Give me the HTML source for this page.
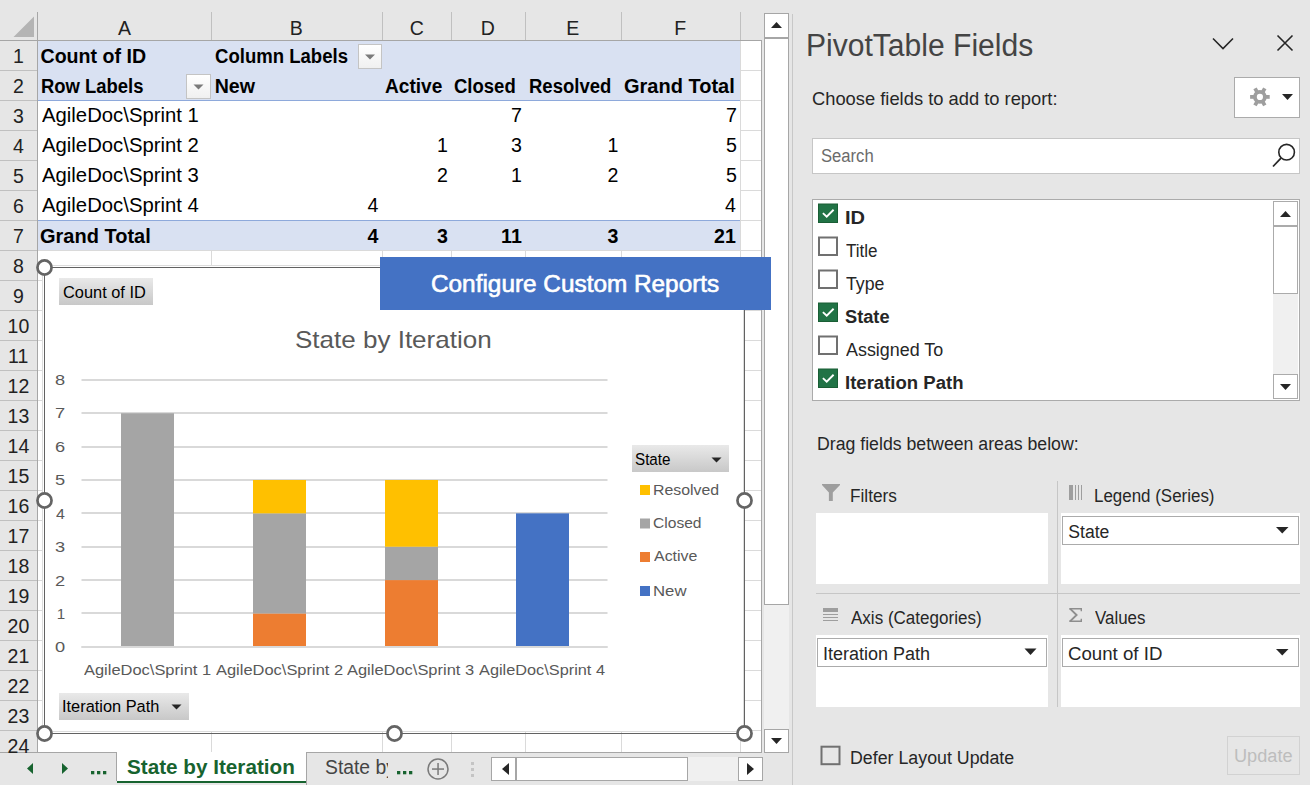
<!DOCTYPE html>
<html><head><meta charset="utf-8"><title>Excel PivotTable</title><style>
html,body{margin:0;padding:0}
body{width:1310px;height:785px;overflow:hidden;position:relative;background:#e6e6e6;font-family:'Liberation Sans',sans-serif}
.a{position:absolute}
.t{position:absolute;white-space:nowrap;line-height:1;font-family:'Liberation Sans',sans-serif}
svg{position:absolute;left:0;top:0;overflow:visible}
</style></head><body>
<div class="a" style="left:38px;top:41px;width:723px;height:711px;background:#fff;"></div>
<div class="a" style="left:211px;top:41px;width:1px;height:711px;background:#dadada;"></div>
<div class="a" style="left:382px;top:41px;width:1px;height:711px;background:#dadada;"></div>
<div class="a" style="left:451px;top:41px;width:1px;height:711px;background:#dadada;"></div>
<div class="a" style="left:525px;top:41px;width:1px;height:711px;background:#dadada;"></div>
<div class="a" style="left:621px;top:41px;width:1px;height:711px;background:#dadada;"></div>
<div class="a" style="left:740px;top:41px;width:1px;height:711px;background:#dadada;"></div>
<div class="a" style="left:38px;top:70px;width:723px;height:1px;background:#dadada;"></div>
<div class="a" style="left:38px;top:100px;width:723px;height:1px;background:#dadada;"></div>
<div class="a" style="left:38px;top:130px;width:723px;height:1px;background:#dadada;"></div>
<div class="a" style="left:38px;top:160px;width:723px;height:1px;background:#dadada;"></div>
<div class="a" style="left:38px;top:190px;width:723px;height:1px;background:#dadada;"></div>
<div class="a" style="left:38px;top:220px;width:723px;height:1px;background:#dadada;"></div>
<div class="a" style="left:38px;top:250px;width:723px;height:1px;background:#dadada;"></div>
<div class="a" style="left:38px;top:280px;width:723px;height:1px;background:#dadada;"></div>
<div class="a" style="left:38px;top:310px;width:723px;height:1px;background:#dadada;"></div>
<div class="a" style="left:38px;top:340px;width:723px;height:1px;background:#dadada;"></div>
<div class="a" style="left:38px;top:370px;width:723px;height:1px;background:#dadada;"></div>
<div class="a" style="left:38px;top:400px;width:723px;height:1px;background:#dadada;"></div>
<div class="a" style="left:38px;top:430px;width:723px;height:1px;background:#dadada;"></div>
<div class="a" style="left:38px;top:460px;width:723px;height:1px;background:#dadada;"></div>
<div class="a" style="left:38px;top:490px;width:723px;height:1px;background:#dadada;"></div>
<div class="a" style="left:38px;top:520px;width:723px;height:1px;background:#dadada;"></div>
<div class="a" style="left:38px;top:550px;width:723px;height:1px;background:#dadada;"></div>
<div class="a" style="left:38px;top:580px;width:723px;height:1px;background:#dadada;"></div>
<div class="a" style="left:38px;top:610px;width:723px;height:1px;background:#dadada;"></div>
<div class="a" style="left:38px;top:640px;width:723px;height:1px;background:#dadada;"></div>
<div class="a" style="left:38px;top:670px;width:723px;height:1px;background:#dadada;"></div>
<div class="a" style="left:38px;top:700px;width:723px;height:1px;background:#dadada;"></div>
<div class="a" style="left:38px;top:730px;width:723px;height:1px;background:#dadada;"></div>
<div class="a" style="left:38px;top:760px;width:723px;height:1px;background:#dadada;"></div>
<div class="a" style="left:38px;top:41px;width:702px;height:59px;background:#d9e1f2;"></div>
<div class="a" style="left:38px;top:101px;width:702px;height:119px;background:#fff;"></div>
<div class="a" style="left:38px;top:221px;width:702px;height:29px;background:#d9e1f2;"></div>
<div class="a" style="left:38px;top:100px;width:702px;height:1px;background:#8ea9db;"></div>
<div class="a" style="left:38px;top:220px;width:702px;height:1px;background:#8ea9db;"></div>
<div class="a" style="left:211px;top:12px;width:1px;height:28px;background:#c0c0c0;"></div>
<div class="a" style="left:382px;top:12px;width:1px;height:28px;background:#c0c0c0;"></div>
<div class="a" style="left:451px;top:12px;width:1px;height:28px;background:#c0c0c0;"></div>
<div class="a" style="left:525px;top:12px;width:1px;height:28px;background:#c0c0c0;"></div>
<div class="a" style="left:621px;top:12px;width:1px;height:28px;background:#c0c0c0;"></div>
<div class="a" style="left:740px;top:12px;width:1px;height:28px;background:#c0c0c0;"></div>
<div class="a" style="left:0px;top:70px;width:37px;height:1px;background:#c0c0c0;"></div>
<div class="a" style="left:0px;top:100px;width:37px;height:1px;background:#c0c0c0;"></div>
<div class="a" style="left:0px;top:130px;width:37px;height:1px;background:#c0c0c0;"></div>
<div class="a" style="left:0px;top:160px;width:37px;height:1px;background:#c0c0c0;"></div>
<div class="a" style="left:0px;top:190px;width:37px;height:1px;background:#c0c0c0;"></div>
<div class="a" style="left:0px;top:220px;width:37px;height:1px;background:#c0c0c0;"></div>
<div class="a" style="left:0px;top:250px;width:37px;height:1px;background:#c0c0c0;"></div>
<div class="a" style="left:0px;top:280px;width:37px;height:1px;background:#c0c0c0;"></div>
<div class="a" style="left:0px;top:310px;width:37px;height:1px;background:#c0c0c0;"></div>
<div class="a" style="left:0px;top:340px;width:37px;height:1px;background:#c0c0c0;"></div>
<div class="a" style="left:0px;top:370px;width:37px;height:1px;background:#c0c0c0;"></div>
<div class="a" style="left:0px;top:400px;width:37px;height:1px;background:#c0c0c0;"></div>
<div class="a" style="left:0px;top:430px;width:37px;height:1px;background:#c0c0c0;"></div>
<div class="a" style="left:0px;top:460px;width:37px;height:1px;background:#c0c0c0;"></div>
<div class="a" style="left:0px;top:490px;width:37px;height:1px;background:#c0c0c0;"></div>
<div class="a" style="left:0px;top:520px;width:37px;height:1px;background:#c0c0c0;"></div>
<div class="a" style="left:0px;top:550px;width:37px;height:1px;background:#c0c0c0;"></div>
<div class="a" style="left:0px;top:580px;width:37px;height:1px;background:#c0c0c0;"></div>
<div class="a" style="left:0px;top:610px;width:37px;height:1px;background:#c0c0c0;"></div>
<div class="a" style="left:0px;top:640px;width:37px;height:1px;background:#c0c0c0;"></div>
<div class="a" style="left:0px;top:670px;width:37px;height:1px;background:#c0c0c0;"></div>
<div class="a" style="left:0px;top:700px;width:37px;height:1px;background:#c0c0c0;"></div>
<div class="a" style="left:0px;top:730px;width:37px;height:1px;background:#c0c0c0;"></div>
<div class="a" style="left:0px;top:760px;width:37px;height:1px;background:#c0c0c0;"></div>
<div class="a" style="left:0px;top:40px;width:762px;height:1px;background:#a6a6a6;"></div>
<div class="a" style="left:37px;top:12px;width:1px;height:740px;background:#a6a6a6;"></div>
<div class="a" style="left:761px;top:41px;width:1px;height:711px;background:#a6a6a6;"></div>
<svg width="1310" height="785"><polygon points="13.5,37 34,16.5 34,37" fill="#b4b4b4"/></svg>
<div class="a" style="left:358px;top:44px;width:24px;height:25px;background:linear-gradient(#ffffff,#f0f0f0);box-sizing:border-box;border:1px solid #c4c4c4;"></div>
<svg width="1310" height="785"><polygon points="365.0,54.5 375.0,54.5 370.0,59.5" fill="#7a7a7a"/></svg>
<div class="a" style="left:186px;top:74px;width:25px;height:25px;background:linear-gradient(#ffffff,#f0f0f0);box-sizing:border-box;border:1px solid #c4c4c4;"></div>
<svg width="1310" height="785"><polygon points="193.5,84.5 203.5,84.5 198.5,89.5" fill="#7a7a7a"/></svg>
<div class="a" style="left:42px;top:265px;width:702px;height:467px;background:#fff;box-sizing:border-box;border:1px solid #dcdcdc;"></div>
<div class="a" style="left:44px;top:267px;width:701px;height:467px;box-sizing:border-box;border:1px solid #626262;"></div>
<svg width="1310" height="785"><rect x="81.5" y="379" width="526" height="2" fill="#d9d9d9"/><rect x="81.5" y="412" width="526" height="2" fill="#d9d9d9"/><rect x="81.5" y="446" width="526" height="2" fill="#d9d9d9"/><rect x="81.5" y="479" width="526" height="2" fill="#d9d9d9"/><rect x="81.5" y="512" width="526" height="2" fill="#d9d9d9"/><rect x="81.5" y="546" width="526" height="2" fill="#d9d9d9"/><rect x="81.5" y="579" width="526" height="2" fill="#d9d9d9"/><rect x="81.5" y="612" width="526" height="2" fill="#d9d9d9"/><rect x="81.5" y="646" width="526" height="2" fill="#d9d9d9"/><rect x="121" y="413.26" width="53" height="233.54" fill="#a5a5a5"/><rect x="253" y="613.44" width="53" height="33.36" fill="#ed7d31"/><rect x="253" y="513.35" width="53" height="100.09" fill="#a5a5a5"/><rect x="253" y="479.99" width="53" height="33.36" fill="#ffc000"/><rect x="385" y="580.07" width="53" height="66.73" fill="#ed7d31"/><rect x="385" y="546.71" width="53" height="33.36" fill="#a5a5a5"/><rect x="385" y="479.99" width="53" height="66.73" fill="#ffc000"/><rect x="516" y="513.35" width="53" height="133.45" fill="#4472c4"/><rect x="81.5" y="646" width="526" height="2" fill="#d9d9d9"/><rect x="640" y="485" width="10" height="10" fill="#ffc000"/><rect x="640" y="518.5" width="10" height="10" fill="#a5a5a5"/><rect x="640" y="552" width="10" height="10" fill="#ed7d31"/><rect x="640" y="586" width="10" height="10" fill="#4472c4"/></svg>
<div class="a" style="left:59px;top:278px;width:94px;height:27px;background:linear-gradient(#e9e9e9,#c8c8c8);"></div>
<div class="a" style="left:59px;top:693px;width:130px;height:27px;background:linear-gradient(#e9e9e9,#c8c8c8);"></div>
<div class="a" style="left:632px;top:445px;width:97px;height:27px;background:linear-gradient(#e9e9e9,#c8c8c8);"></div>
<svg width="1310" height="785"><polygon points="171.5,704.5 181.5,704.5 176.5,709.5" fill="#262626"/><polygon points="711.5,457.5 721.5,457.5 716.5,462.5" fill="#262626"/></svg>
<svg width="1310" height="785"><circle cx="44.5" cy="267.5" r="7.05" fill="#fff" stroke="#646464" stroke-width="2.7"/><circle cx="44.5" cy="500.5" r="7.05" fill="#fff" stroke="#646464" stroke-width="2.7"/><circle cx="44.5" cy="733.5" r="7.05" fill="#fff" stroke="#646464" stroke-width="2.7"/><circle cx="394.5" cy="733.5" r="7.05" fill="#fff" stroke="#646464" stroke-width="2.7"/><circle cx="744.5" cy="733.5" r="7.05" fill="#fff" stroke="#646464" stroke-width="2.7"/><circle cx="744.5" cy="500.5" r="7.05" fill="#fff" stroke="#646464" stroke-width="2.7"/></svg>
<div class="a" style="left:764px;top:13px;width:25px;height:25px;background:#fff;box-sizing:border-box;border:1px solid #a6a6a6;"></div>
<div class="a" style="left:764px;top:38px;width:25px;height:567px;background:#fff;box-sizing:border-box;border:1px solid #a6a6a6;"></div>
<div class="a" style="left:764px;top:605px;width:25px;height:124px;background:#f0f0f0;"></div>
<div class="a" style="left:764px;top:729px;width:25px;height:24px;background:#fff;box-sizing:border-box;border:1px solid #a6a6a6;"></div>
<svg width="1310" height="785"><polygon points="771,28 782,28 776.5,22" fill="#262626"/><polygon points="771,738 782,738 776.5,744" fill="#262626"/></svg>
<div class="a" style="left:380px;top:257px;width:391px;height:53px;background:#4472c4;"></div>
<div class="a" style="left:792px;top:14px;width:1px;height:771px;background:#c8c8c8;"></div>
<div class="a" style="left:0px;top:753px;width:762px;height:32px;background:#e6e6e6;"></div>
<div class="a" style="left:0px;top:752px;width:762px;height:1px;background:#a6a6a6;"></div>
<div class="a" style="left:116px;top:752px;width:191px;height:29px;background:#fff;"></div>
<div class="a" style="left:116px;top:752px;width:1px;height:29px;background:#a6a6a6;"></div>
<div class="a" style="left:306px;top:752px;width:1px;height:33px;background:#a6a6a6;"></div>
<div class="a" style="left:117px;top:781px;width:189px;height:2px;background:#17632f;"></div>
<svg width="1310" height="785"><polygon points="33,763 33,774 27,768.5" fill="#17632f"/><polygon points="62,763 62,774 68,768.5" fill="#17632f"/><rect x="91" y="771" width="3.3" height="3.3" fill="#17632f"/><rect x="97" y="771" width="3.3" height="3.3" fill="#17632f"/><rect x="103" y="771" width="3.3" height="3.3" fill="#17632f"/><rect x="397" y="771" width="3.3" height="3.3" fill="#17632f"/><rect x="403" y="771" width="3.3" height="3.3" fill="#17632f"/><rect x="409" y="771" width="3.3" height="3.3" fill="#17632f"/><circle cx="438" cy="769" r="10" fill="none" stroke="#7a7a7a" stroke-width="1.5"/><rect x="432" y="768.3" width="12" height="1.5" fill="#7a7a7a"/><rect x="437.3" y="763" width="1.5" height="12" fill="#7a7a7a"/><rect x="471" y="762" width="3" height="3" fill="#c4c4c4"/><rect x="471" y="768" width="3" height="3" fill="#c4c4c4"/><rect x="471" y="774" width="3" height="3" fill="#c4c4c4"/></svg>
<div class="a" style="left:491px;top:757px;width:25px;height:24px;background:#fff;box-sizing:border-box;border:1px solid #a6a6a6;"></div>
<div class="a" style="left:516px;top:757px;width:172px;height:24px;background:#fff;box-sizing:border-box;border:1px solid #a6a6a6;"></div>
<div class="a" style="left:688px;top:757px;width:50px;height:24px;background:#f0f0f0;"></div>
<div class="a" style="left:738px;top:757px;width:25px;height:24px;background:#fff;box-sizing:border-box;border:1px solid #a6a6a6;"></div>
<svg width="1310" height="785"><polygon points="509,763 509,775 502,769" fill="#262626"/><polygon points="747,763 747,775 754,769" fill="#262626"/></svg>
<svg width="1310" height="785"><polyline points="1213,38.5 1223,48.5 1233,38.5" fill="none" stroke="#262626" stroke-width="1.6"/><path d="M1277.5,35.5 L1292.5,50.5 M1292.5,35.5 L1277.5,50.5" stroke="#262626" stroke-width="1.6"/></svg>
<div class="a" style="left:1234px;top:77px;width:66px;height:41px;background:#fff;box-sizing:border-box;border:1px solid #ababab;"></div>
<svg width="1310" height="785"><rect x="1250.10" y="95.00" width="19.6" height="3.8" fill="#9e9e9e" transform="rotate(0 1259.9 96.9)"/><rect x="1250.10" y="95.00" width="19.6" height="3.8" fill="#9e9e9e" transform="rotate(60 1259.9 96.9)"/><rect x="1250.10" y="95.00" width="19.6" height="3.8" fill="#9e9e9e" transform="rotate(120 1259.9 96.9)"/><circle cx="1259.9" cy="96.9" r="6.8" fill="#9e9e9e"/><circle cx="1259.9" cy="96.9" r="3.1" fill="#fff"/><polygon points="1282,94 1293,94 1287.5,100" fill="#262626"/></svg>
<div class="a" style="left:812px;top:138px;width:488px;height:36px;background:#fff;box-sizing:border-box;border:1px solid #c6c6c6;"></div>
<svg width="1310" height="785"><circle cx="1286.6" cy="152.2" r="7.8" fill="none" stroke="#262626" stroke-width="1.6"/><line x1="1273" y1="166.5" x2="1281" y2="158.2" stroke="#262626" stroke-width="1.8"/></svg>
<div class="a" style="left:812px;top:199px;width:488px;height:202px;background:#fff;box-sizing:border-box;border:1px solid #ababab;"></div>
<svg width="1310" height="785"><rect x="818.5" y="204.0" width="19" height="18.5" fill="#217346" stroke="#1a5e35" stroke-width="1"/><polyline points="822.9,213.1 826.7,216.6 833.6,209.8" fill="none" stroke="#fff" stroke-width="1.9"/><rect x="819" y="237.5" width="18" height="17.5" fill="#fff" stroke="#707070" stroke-width="2"/><rect x="819" y="270.5" width="18" height="17.5" fill="#fff" stroke="#707070" stroke-width="2"/><rect x="818.5" y="303.0" width="19" height="18.5" fill="#217346" stroke="#1a5e35" stroke-width="1"/><polyline points="822.9,312.1 826.7,315.6 833.6,308.8" fill="none" stroke="#fff" stroke-width="1.9"/><rect x="819" y="336.5" width="18" height="17.5" fill="#fff" stroke="#707070" stroke-width="2"/><rect x="818.5" y="369.0" width="19" height="18.5" fill="#217346" stroke="#1a5e35" stroke-width="1"/><polyline points="822.9,378.1 826.7,381.6 833.6,374.8" fill="none" stroke="#fff" stroke-width="1.9"/></svg>
<div class="a" style="left:1273px;top:201px;width:25px;height:25px;background:#fff;box-sizing:border-box;border:1px solid #ababab;"></div>
<div class="a" style="left:1273px;top:226px;width:25px;height:68px;background:#fff;box-sizing:border-box;border:1px solid #ababab;"></div>
<div class="a" style="left:1273px;top:294px;width:25px;height:80px;background:#f0f0f0;"></div>
<div class="a" style="left:1273px;top:374px;width:25px;height:25px;background:#fff;box-sizing:border-box;border:1px solid #ababab;"></div>
<svg width="1310" height="785"><polygon points="1280,217 1291,217 1285.5,211" fill="#262626"/><polygon points="1280,384 1291,384 1285.5,390" fill="#262626"/></svg>
<div class="a" style="left:1057px;top:481px;width:1px;height:226px;background:#c6c6c6;"></div>
<div class="a" style="left:816px;top:593px;width:484px;height:1px;background:#c6c6c6;"></div>
<div class="a" style="left:816px;top:513px;width:232px;height:71px;background:#fff;"></div>
<div class="a" style="left:1061px;top:513px;width:239px;height:71px;background:#fff;"></div>
<div class="a" style="left:816px;top:635px;width:232px;height:72px;background:#fff;"></div>
<div class="a" style="left:1061px;top:635px;width:239px;height:72px;background:#fff;"></div>
<div class="a" style="left:817px;top:638px;width:230px;height:29px;background:#fff;box-sizing:border-box;border:1px solid #ababab;"></div>
<div class="a" style="left:1062px;top:516px;width:237px;height:29px;background:#fff;box-sizing:border-box;border:1px solid #ababab;"></div>
<div class="a" style="left:1062px;top:638px;width:237px;height:29px;background:#fff;box-sizing:border-box;border:1px solid #ababab;"></div>
<svg width="1310" height="785"><polygon points="1024.5,648.5 1036.5,648.5 1030.5,655" fill="#262626"/><polygon points="1276,527 1288.5,527 1282.25,533.5" fill="#262626"/><polygon points="1276,649 1288.5,649 1282.25,655.5" fill="#262626"/><polygon points="822,484 840,484 840,485 832.8,492.5 832.8,501 828.9,501 828.9,492.5 822,485" fill="#9e9e9e"/><rect x="1069" y="485" width="4" height="15" fill="#9e9e9e"/><rect x="1075" y="485" width="1" height="15" fill="#9e9e9e"/><rect x="1078" y="485" width="1" height="15" fill="#9e9e9e"/><rect x="1081" y="485" width="1" height="15" fill="#9e9e9e"/><rect x="823" y="608" width="15" height="4" fill="#9e9e9e"/><rect x="823" y="614" width="15" height="1" fill="#9e9e9e"/><rect x="823" y="617" width="15" height="1" fill="#9e9e9e"/><rect x="823" y="620" width="15" height="1" fill="#9e9e9e"/><path d="M1069.3,608.7 L1081.8,608.7 M1081.3,608 L1081.3,611.2 M1081.3,618.8 L1081.3,622 M1069.3,621.3 L1081.8,621.3" stroke="#8e8e8e" stroke-width="1.4" fill="none"/><polyline points="1070,608.6 1076.6,615 1070,621.4" stroke="#8e8e8e" stroke-width="1.9" fill="none"/><rect x="821.5" y="746.7" width="18" height="17.5" fill="none" stroke="#707070" stroke-width="2"/></svg>
<div class="a" style="left:1227px;top:736px;width:73px;height:39px;box-sizing:border-box;border:1px solid #d2d2d2;"></div>
<div class="t" style="left:118.10px;top:19.00px;font-size:19.5px;color:#222;">A</div>
<div class="t" style="left:289.80px;top:19.00px;font-size:19.5px;color:#222;">B</div>
<div class="t" style="left:409.80px;top:19.00px;font-size:19.5px;color:#222;">C</div>
<div class="t" style="left:480.70px;top:19.00px;font-size:19.5px;color:#222;">D</div>
<div class="t" style="left:566.20px;top:19.00px;font-size:19.5px;color:#222;">E</div>
<div class="t" style="left:674.20px;top:19.00px;font-size:19.5px;color:#222;">F</div>
<div class="t" style="left:13.10px;top:47.00px;font-size:19.5px;color:#222;">1</div>
<div class="t" style="left:13.10px;top:77.00px;font-size:19.5px;color:#222;">2</div>
<div class="t" style="left:13.10px;top:107.00px;font-size:19.5px;color:#222;">3</div>
<div class="t" style="left:13.10px;top:137.00px;font-size:19.5px;color:#222;">4</div>
<div class="t" style="left:13.10px;top:167.00px;font-size:19.5px;color:#222;">5</div>
<div class="t" style="left:13.10px;top:197.00px;font-size:19.5px;color:#222;">6</div>
<div class="t" style="left:13.10px;top:227.00px;font-size:19.5px;color:#222;">7</div>
<div class="t" style="left:13.10px;top:257.00px;font-size:19.5px;color:#222;">8</div>
<div class="t" style="left:13.10px;top:287.00px;font-size:19.5px;color:#222;">9</div>
<div class="t" style="left:7.60px;top:317.00px;font-size:19.5px;color:#222;">10</div>
<div class="t" style="left:8.10px;top:347.00px;font-size:19.5px;color:#222;">11</div>
<div class="t" style="left:7.60px;top:377.00px;font-size:19.5px;color:#222;">12</div>
<div class="t" style="left:7.60px;top:407.00px;font-size:19.5px;color:#222;">13</div>
<div class="t" style="left:7.60px;top:437.00px;font-size:19.5px;color:#222;">14</div>
<div class="t" style="left:7.60px;top:467.00px;font-size:19.5px;color:#222;">15</div>
<div class="t" style="left:7.60px;top:497.00px;font-size:19.5px;color:#222;">16</div>
<div class="t" style="left:7.60px;top:527.00px;font-size:19.5px;color:#222;">17</div>
<div class="t" style="left:7.60px;top:557.00px;font-size:19.5px;color:#222;">18</div>
<div class="t" style="left:7.60px;top:587.00px;font-size:19.5px;color:#222;">19</div>
<div class="t" style="left:7.60px;top:617.00px;font-size:19.5px;color:#222;">20</div>
<div class="t" style="left:7.60px;top:647.00px;font-size:19.5px;color:#222;">21</div>
<div class="t" style="left:7.60px;top:677.00px;font-size:19.5px;color:#222;">22</div>
<div class="t" style="left:7.60px;top:707.00px;font-size:19.5px;color:#222;">23</div>
<div class="t" style="left:7.60px;top:737.00px;font-size:19.5px;color:#222;">24</div>
<div class="t" style="left:40.50px;top:47.00px;font-size:19.6px;font-weight:bold;color:#000;">Count of ID</div>
<div class="t" style="left:214.75px;top:47.00px;font-size:19.6px;font-weight:bold;color:#000;transform:scaleX(0.9468);transform-origin:0 0;">Column Labels</div>
<div class="t" style="left:40.56px;top:77.00px;font-size:19.6px;font-weight:bold;color:#000;transform:scaleX(0.9411);transform-origin:0 0;">Row Labels</div>
<div class="t" style="left:214.70px;top:77.00px;font-size:19.6px;font-weight:bold;color:#000;">New</div>
<div class="t" style="left:385.03px;top:77.00px;font-size:19.6px;font-weight:bold;color:#000;transform:scaleX(0.9737);transform-origin:0 0;">Active</div>
<div class="t" style="left:454.26px;top:77.00px;font-size:19.6px;font-weight:bold;color:#000;transform:scaleX(0.9444);transform-origin:0 0;">Closed</div>
<div class="t" style="left:528.66px;top:77.00px;font-size:19.6px;font-weight:bold;color:#000;transform:scaleX(0.9447);transform-origin:0 0;">Resolved</div>
<div class="t" style="left:624.48px;top:77.00px;font-size:19.6px;font-weight:bold;color:#000;transform:scaleX(1.0208);transform-origin:0 0;">Grand Total</div>
<div class="t" style="left:41.50px;top:106.00px;font-size:19.6px;color:#000;transform:scaleX(1.0364);transform-origin:0 0;">AgileDoc\Sprint 1</div>
<div class="t" style="left:41.50px;top:136.00px;font-size:19.6px;color:#000;transform:scaleX(1.0364);transform-origin:0 0;">AgileDoc\Sprint 2</div>
<div class="t" style="left:41.50px;top:166.00px;font-size:19.6px;color:#000;transform:scaleX(1.0364);transform-origin:0 0;">AgileDoc\Sprint 3</div>
<div class="t" style="left:41.50px;top:196.00px;font-size:19.6px;color:#000;transform:scaleX(1.0364);transform-origin:0 0;">AgileDoc\Sprint 4</div>
<div class="t" style="left:40.48px;top:227.00px;font-size:19.6px;font-weight:bold;color:#000;transform:scaleX(1.0208);transform-origin:0 0;">Grand Total</div>
<div class="t" style="left:511.10px;top:106.00px;font-size:19.6px;color:#000;">7</div>
<div class="t" style="left:726.00px;top:106.00px;font-size:19.6px;color:#000;">7</div>
<div class="t" style="left:437.10px;top:136.00px;font-size:19.6px;color:#000;">1</div>
<div class="t" style="left:511.10px;top:136.00px;font-size:19.6px;color:#000;">3</div>
<div class="t" style="left:607.50px;top:136.00px;font-size:19.6px;color:#000;">1</div>
<div class="t" style="left:726.00px;top:136.00px;font-size:19.6px;color:#000;">5</div>
<div class="t" style="left:437.10px;top:166.00px;font-size:19.6px;color:#000;">2</div>
<div class="t" style="left:511.10px;top:166.00px;font-size:19.6px;color:#000;">1</div>
<div class="t" style="left:607.50px;top:166.00px;font-size:19.6px;color:#000;">2</div>
<div class="t" style="left:726.00px;top:166.00px;font-size:19.6px;color:#000;">5</div>
<div class="t" style="left:367.50px;top:196.00px;font-size:19.6px;color:#000;">4</div>
<div class="t" style="left:725.00px;top:196.00px;font-size:19.6px;color:#000;">4</div>
<div class="t" style="left:367.50px;top:227.00px;font-size:19.6px;font-weight:bold;color:#000;">4</div>
<div class="t" style="left:437.10px;top:227.00px;font-size:19.6px;font-weight:bold;color:#000;">3</div>
<div class="t" style="left:501.10px;top:227.00px;font-size:19.6px;font-weight:bold;color:#000;">11</div>
<div class="t" style="left:607.50px;top:227.00px;font-size:19.6px;font-weight:bold;color:#000;">3</div>
<div class="t" style="left:714.00px;top:227.00px;font-size:19.6px;font-weight:bold;color:#000;">21</div>
<div class="t" style="left:431.06px;top:273.00px;font-size:23.5px;color:#fff;transform:scaleX(1.0361);transform-origin:0 0;-webkit-text-stroke:0.6px #fff">Configure Custom Reports</div>
<div class="t" style="left:62.62px;top:285.00px;font-size:16.8px;color:#000;transform:scaleX(0.9759);transform-origin:0 0;">Count of ID</div>
<div class="t" style="left:294.52px;top:328.00px;font-size:24px;color:#595959;transform:scaleX(1.0838);transform-origin:0 0;">State by Iteration</div>
<div class="t" style="left:55.20px;top:372.00px;font-size:15.2px;color:#595959;transform:scaleX(1.2000);transform-origin:0 0;">8</div>
<div class="t" style="left:55.20px;top:405.00px;font-size:15.2px;color:#595959;transform:scaleX(1.2000);transform-origin:0 0;">7</div>
<div class="t" style="left:55.20px;top:439.00px;font-size:15.2px;color:#595959;transform:scaleX(1.2000);transform-origin:0 0;">6</div>
<div class="t" style="left:55.20px;top:472.00px;font-size:15.2px;color:#595959;transform:scaleX(1.2000);transform-origin:0 0;">5</div>
<div class="t" style="left:56.40px;top:506.00px;font-size:15.2px;color:#595959;transform:scaleX(1.0500);transform-origin:0 0;">4</div>
<div class="t" style="left:55.20px;top:539.00px;font-size:15.2px;color:#595959;transform:scaleX(1.2000);transform-origin:0 0;">3</div>
<div class="t" style="left:55.20px;top:573.00px;font-size:15.2px;color:#595959;transform:scaleX(1.2000);transform-origin:0 0;">2</div>
<div class="t" style="left:56.80px;top:606.00px;font-size:15.2px;color:#595959;">1</div>
<div class="t" style="left:55.20px;top:639.00px;font-size:15.2px;color:#595959;transform:scaleX(1.2000);transform-origin:0 0;">0</div>
<div class="t" style="left:84.40px;top:662.00px;font-size:15px;color:#595959;transform:scaleX(1.0965);transform-origin:0 0;">AgileDoc\Sprint 1</div>
<div class="t" style="left:216.00px;top:662.00px;font-size:15px;color:#595959;transform:scaleX(1.0965);transform-origin:0 0;">AgileDoc\Sprint 2</div>
<div class="t" style="left:347.00px;top:662.00px;font-size:15px;color:#595959;transform:scaleX(1.0965);transform-origin:0 0;">AgileDoc\Sprint 3</div>
<div class="t" style="left:478.80px;top:662.00px;font-size:15px;color:#595959;transform:scaleX(1.0871);transform-origin:0 0;">AgileDoc\Sprint 4</div>
<div class="t" style="left:61.93px;top:699.00px;font-size:16.8px;color:#000;transform:scaleX(0.9745);transform-origin:0 0;">Iteration Path</div>
<div class="t" style="left:635.09px;top:452.00px;font-size:16.8px;color:#000;transform:scaleX(0.9053);transform-origin:0 0;">State</div>
<div class="t" style="left:653.30px;top:483.00px;font-size:14.4px;color:#595959;transform:scaleX(1.1034);transform-origin:0 0;">Resolved</div>
<div class="t" style="left:653.32px;top:516.00px;font-size:14.4px;color:#595959;transform:scaleX(1.0837);transform-origin:0 0;">Closed</div>
<div class="t" style="left:654.40px;top:549.00px;font-size:14.4px;color:#595959;transform:scaleX(1.1077);transform-origin:0 0;">Active</div>
<div class="t" style="left:653.24px;top:584.00px;font-size:14.4px;color:#595959;transform:scaleX(1.1643);transform-origin:0 0;">New</div>
<div class="t" style="left:127.14px;top:758.00px;font-size:19.5px;font-weight:bold;color:#17632f;transform:scaleX(1.0609);transform-origin:0 0;">State by Iteration</div>
<div class="a" style="left:307px;top:753px;width:81px;height:32px;overflow:hidden"><div class="t" style="left:17.51px;top:5.00px;font-size:19.5px;color:#444;transform:scaleX(0.9900);transform-origin:0 0;">State by Iteration</div></div>
<div class="t" style="left:805.96px;top:30.00px;font-size:31px;color:#444;transform:scaleX(0.9697);transform-origin:0 0;">PivotTable Fields</div>
<div class="t" style="left:812.46px;top:91.00px;font-size:17.7px;color:#262626;transform:scaleX(1.0362);transform-origin:0 0;">Choose fields to add to report:</div>
<div class="t" style="left:820.68px;top:147.00px;font-size:18px;color:#6b6b6b;transform:scaleX(0.9236);transform-origin:0 0;">Search</div>
<div class="t" style="left:845.06px;top:210.00px;font-size:17.6px;font-weight:bold;color:#262626;transform:scaleX(1.1375);transform-origin:0 0;">ID</div>
<div class="t" style="left:846.20px;top:243.00px;font-size:17.6px;color:#262626;transform:scaleX(0.9688);transform-origin:0 0;">Title</div>
<div class="t" style="left:846.20px;top:276.00px;font-size:17.6px;color:#262626;transform:scaleX(1.0081);transform-origin:0 0;">Type</div>
<div class="t" style="left:845.16px;top:309.00px;font-size:17.6px;font-weight:bold;color:#262626;transform:scaleX(1.0357);transform-origin:0 0;">State</div>
<div class="t" style="left:846.20px;top:342.00px;font-size:17.6px;color:#262626;transform:scaleX(1.0179);transform-origin:0 0;">Assigned To</div>
<div class="t" style="left:845.15px;top:375.00px;font-size:17.6px;font-weight:bold;color:#262626;transform:scaleX(1.0541);transform-origin:0 0;">Iteration Path</div>
<div class="t" style="left:817.09px;top:436.00px;font-size:17.6px;color:#262626;transform:scaleX(1.0058);transform-origin:0 0;">Drag fields between areas below:</div>
<div class="t" style="left:849.62px;top:488.00px;font-size:17.6px;color:#262626;transform:scaleX(0.9783);transform-origin:0 0;">Filters</div>
<div class="t" style="left:1094.14px;top:488.00px;font-size:17.6px;color:#262626;transform:scaleX(0.9626);transform-origin:0 0;">Legend (Series)</div>
<div class="t" style="left:850.50px;top:610.00px;font-size:17.6px;color:#262626;transform:scaleX(0.9679);transform-origin:0 0;">Axis (Categories)</div>
<div class="t" style="left:1095.10px;top:610.00px;font-size:17.6px;color:#262626;transform:scaleX(0.9615);transform-origin:0 0;">Values</div>
<div class="t" style="left:1068.30px;top:524.00px;font-size:17.6px;color:#262626;">State</div>
<div class="t" style="left:822.85px;top:646.00px;font-size:17.6px;color:#262626;transform:scaleX(1.0235);transform-origin:0 0;">Iteration Path</div>
<div class="t" style="left:1068.24px;top:646.00px;font-size:17.6px;color:#262626;transform:scaleX(1.0609);transform-origin:0 0;">Count of ID</div>
<div class="t" style="left:849.69px;top:750.00px;font-size:17.6px;color:#262626;transform:scaleX(1.0112);transform-origin:0 0;">Defer Layout Update</div>
<div class="t" style="left:1233.57px;top:748.00px;font-size:17.6px;color:#bdbdbd;transform:scaleX(1.0327);transform-origin:0 0;">Update</div>
</body></html>
